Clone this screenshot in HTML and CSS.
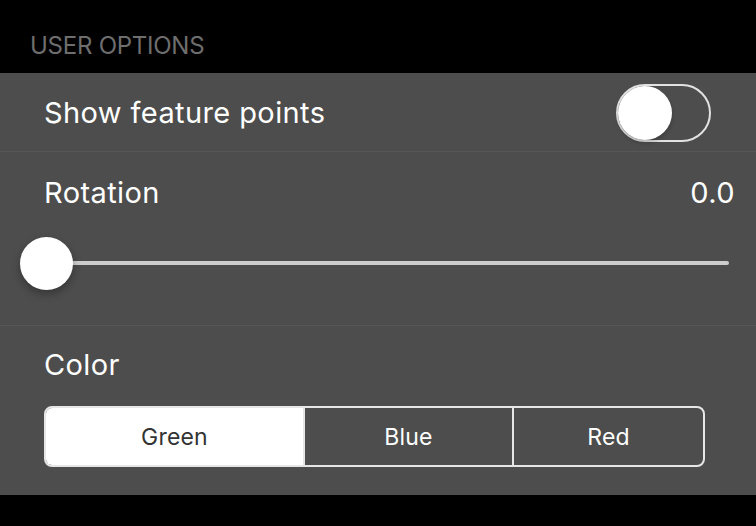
FILE: index.html
```html
<!DOCTYPE html>
<html>
<head>
<meta charset="utf-8">
<link rel="stylesheet" href="styles.css">
</head>
<body>
<div class="screen">
  <header class="section-header">USER OPTIONS</header>
  <section class="panel">
    <div class="row row-toggle">
      <span class="label">Show feature points</span>
      <div class="switch"><div class="switch-knob"></div></div>
    </div>
    <div class="sep"></div>
    <div class="row-slider">
      <div class="slider-head">
        <span class="label">Rotation</span>
        <span class="label value">0.0</span>
      </div>
      <div class="slider">
        <div class="slider-knob"></div>
        <div class="slider-track"></div>
      </div>
    </div>
    <div class="sep"></div>
    <div class="row-color">
      <span class="label">Color</span>
      <div class="segmented">
        <div class="seg seg-green active">Green</div>
        <div class="seg seg-blue">Blue</div>
        <div class="seg seg-red">Red</div>
      </div>
    </div>
  </section>
</div>
</body>
</html>
```

FILE: styles.css
```css
* { box-sizing: border-box; }
html, body {
  margin: 0;
  padding: 0;
  background: #000;
  width: 756px;
  height: 526px;
  overflow: hidden;
  font-family: Inter, "Noto Sans", sans-serif;
}
.screen { display: flex; flex-direction: column; }
.section-header {
  height: 73px;
  padding: 34px 0 0 30px;
  font-size: 24px;
  line-height: 24px;
  color: #6e6e6e;
  letter-spacing: -0.25px;
}
.panel {
  background: #4d4d4d;
  display: flex;
  flex-direction: column;
}
.label {
  font-size: 29px;
  line-height: 29px;
  color: #fff;
  letter-spacing: 0.4px;
}
.row-toggle {
  height: 78px;
  display: flex;
  align-items: center;
  justify-content: space-between;
  padding: 0 45px 0 44px;
}
.switch {
  width: 95px;
  height: 58px;
  border: 2px solid #e2e2e2;
  border-radius: 29px;
  padding: 0;
  display: flex;
  align-items: center;
  margin-top: 1px;
}
.switch-knob {
  width: 54px;
  height: 54px;
  border-radius: 50%;
  background: #fff;
  box-shadow: 0 3px 4px rgba(0,0,0,0.2);
}
.sep {
  height: 1px;
  background: #575757;
}
.row-slider {
  padding: 26px 0 36px 0;
  display: flex;
  flex-direction: column;
  gap: 30px;
}
.slider-head {
  display: flex;
  justify-content: space-between;
  padding: 0 21px 0 44px;
}
.slider {
  height: 52px;
  display: flex;
  align-items: center;
  padding: 0 27px 0 20px;
}
.slider-knob {
  width: 53px;
  height: 53px;
  border-radius: 50%;
  background: #fff;
  box-shadow: 0 4px 8px rgba(0,0,0,0.3);
  flex: none;
  position: relative;
  z-index: 1;
}
.slider-track {
  flex: 1;
  height: 4px;
  background: #cdcdcd;
  border-radius: 2px;
  margin-left: -2px;
}
.row-color {
  padding: 24px 0 28px 44px;
  display: flex;
  flex-direction: column;
  gap: 27px;
}
.segmented {
  width: 661px;
  height: 61px;
  border: 2px solid #e6e6e6;
  border-radius: 8px;
  display: flex;
  overflow: hidden;
}
.seg {
  display: flex;
  align-items: center;
  justify-content: center;
  font-size: 23px;
  color: #fff;
  padding-top: 1px;
  letter-spacing: 0.2px;
}
.seg-green { width: 257px; }
.seg-blue { width: 209px; border-left: 2px solid #e6e6e6; }
.seg-red { flex: 1; border-left: 2px solid #e6e6e6; }
.seg.active { background: #fff; color: #333; }
```
